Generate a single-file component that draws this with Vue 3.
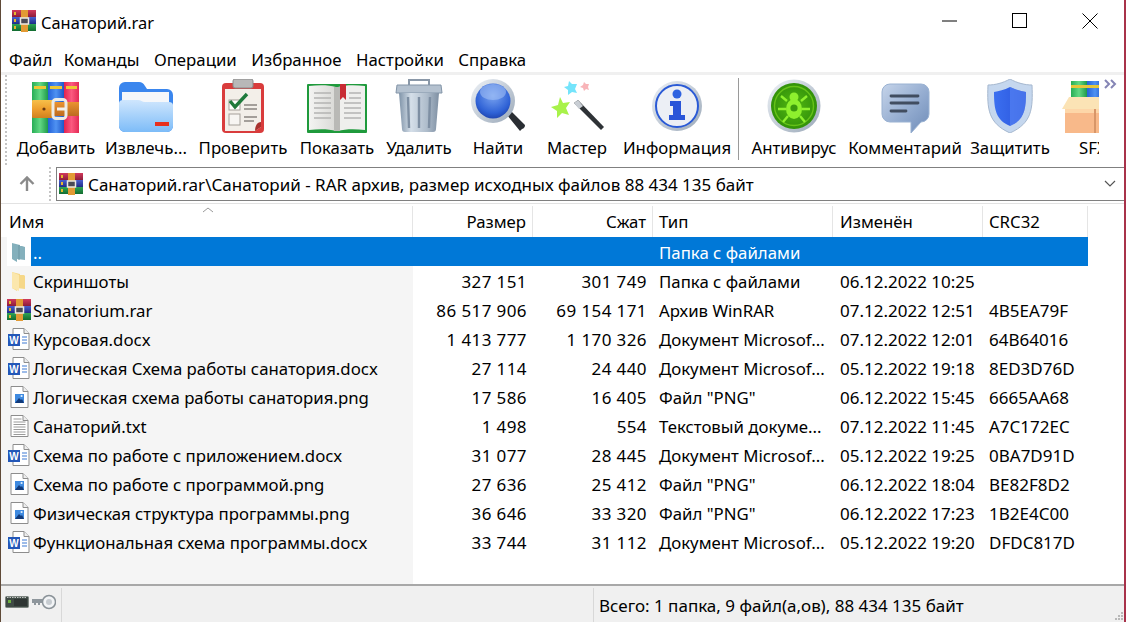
<script setup>
const menus = ['Файл', 'Команды', 'Операции', 'Избранное', 'Настройки', 'Справка']
const tools = [
  { id: 'i-add', label: 'Добавить' },
  { id: 'i-extract', label: 'Извлечь...' },
  { id: 'i-check', label: 'Проверить' },
  { id: 'i-book', label: 'Показать' },
  { id: 'i-trash', label: 'Удалить' },
  { id: 'i-find', label: 'Найти' },
  { id: 'i-wand', label: 'Мастер' },
  { id: 'i-info', label: 'Информация' },
  { sep: true },
  { id: 'i-bug', label: 'Антивирус' },
  { id: 'i-comment', label: 'Комментарий' },
  { id: 'i-shield', label: 'Защитить' },
  { id: 'i-sfx', label: 'SFX' },
]
const files = [
  { icon: 's-up', name: '..', size: '', packed: '', type: 'Папка с файлами', date: '', crc: '', sel: true },
  { icon: 's-folder', name: 'Скриншоты', size: '327 151', packed: '301 749', type: 'Папка с файлами', date: '06.12.2022 10:25', crc: '' },
  { icon: 's-rar', name: 'Sanatorium.rar', size: '86 517 906', packed: '69 154 171', type: 'Архив WinRAR', date: '07.12.2022 12:51', crc: '4B5EA79F' },
  { icon: 's-word', name: 'Курсовая.docx', size: '1 413 777', packed: '1 170 326', type: 'Документ Microsof...', date: '07.12.2022 12:01', crc: '64B64016' },
  { icon: 's-word', name: 'Логическая Схема работы санатория.docx', size: '27 114', packed: '24 440', type: 'Документ Microsof...', date: '05.12.2022 19:18', crc: '8ED3D76D' },
  { icon: 's-png', name: 'Логическая схема работы санатория.png', size: '17 586', packed: '16 405', type: 'Файл "PNG"', date: '06.12.2022 15:45', crc: '6665AA68' },
  { icon: 's-txt', name: 'Санаторий.txt', size: '1 498', packed: '554', type: 'Текстовый докуме...', date: '07.12.2022 11:45', crc: 'A7C172EC' },
  { icon: 's-word', name: 'Схема по работе с приложением.docx', size: '31 077', packed: '28 445', type: 'Документ Microsof...', date: '05.12.2022 19:25', crc: '0BA7D91D' },
  { icon: 's-png', name: 'Схема по работе с программой.png', size: '27 636', packed: '25 412', type: 'Файл "PNG"', date: '06.12.2022 18:04', crc: 'BE82F8D2' },
  { icon: 's-png', name: 'Физическая структура программы.png', size: '36 646', packed: '33 320', type: 'Файл "PNG"', date: '06.12.2022 17:23', crc: '1B2E4C00' },
  { icon: 's-word', name: 'Функциональная схема программы.docx', size: '33 744', packed: '31 112', type: 'Документ Microsof...', date: '05.12.2022 19:20', crc: 'DFDC817D' },
]
</script>

<template>
  <div class="window">
    <svg class="defs" width="0" height="0">
      <defs>
        <linearGradient id="g-belt" x1="0" y1="0" x2="0" y2="1"><stop offset="0" stop-color="#f7c04a"/><stop offset=".5" stop-color="#ee9f2e"/><stop offset="1" stop-color="#d0801f"/></linearGradient>
        <linearGradient id="g-belt2" x1="0" y1="0" x2="0" y2="1"><stop offset="0" stop-color="#ea9430"/><stop offset="1" stop-color="#bd6a20"/></linearGradient>
        <linearGradient id="g-bg" x1="0" y1="0" x2="1" y2="0"><stop offset="0" stop-color="#27ad55"/><stop offset=".5" stop-color="#62d884"/><stop offset="1" stop-color="#1f9a4a"/></linearGradient>
        <linearGradient id="g-bb" x1="0" y1="0" x2="1" y2="0"><stop offset="0" stop-color="#2361d8"/><stop offset=".5" stop-color="#4f92f2"/><stop offset="1" stop-color="#1e56c8"/></linearGradient>
        <linearGradient id="g-br" x1="0" y1="0" x2="1" y2="0"><stop offset="0" stop-color="#e3224e"/><stop offset=".5" stop-color="#fb5a80"/><stop offset="1" stop-color="#e32a55"/></linearGradient>
        <linearGradient id="g-folder" x1="0" y1="0" x2="0" y2="1"><stop offset="0" stop-color="#cfe6fd"/><stop offset="1" stop-color="#7dbcf8"/></linearGradient>
        <linearGradient id="g-trash" x1="0" y1="0" x2="1" y2="0"><stop offset="0" stop-color="#7f93a8"/><stop offset=".3" stop-color="#d5dfe9"/><stop offset=".7" stop-color="#aebccb"/><stop offset="1" stop-color="#7f90a3"/></linearGradient>
        <radialGradient id="g-lens" cx=".5" cy=".35" r=".7"><stop offset="0" stop-color="#7aa4f0"/><stop offset=".7" stop-color="#2f62d6"/><stop offset="1" stop-color="#1c3fa8"/></radialGradient>
        <linearGradient id="g-ring" x1="0" y1="0" x2="1" y2="1"><stop offset="0" stop-color="#eef2f7"/><stop offset="1" stop-color="#9aa8b8"/></linearGradient>
        <radialGradient id="g-bug" cx=".5" cy=".5" r=".6"><stop offset="0" stop-color="#52b812"/><stop offset="1" stop-color="#2c8a08"/></radialGradient>
        <linearGradient id="g-comment" x1="0" y1="0" x2="1" y2="1"><stop offset="0" stop-color="#c5d4ea"/><stop offset=".6" stop-color="#8fa8cd"/><stop offset="1" stop-color="#6f8cb8"/></linearGradient>
        <linearGradient id="g-shield" x1="0" y1="0" x2="1" y2="0"><stop offset="0" stop-color="#3b6ff0"/><stop offset="1" stop-color="#2a55dc"/></linearGradient>
        <linearGradient id="g-paper" x1="0" y1="0" x2="1" y2="0"><stop offset="0" stop-color="#f4f4f2"/><stop offset="1" stop-color="#d9d9d6"/></linearGradient>
        <linearGradient id="g-tr" x1="0" y1="0" x2="0" y2="1"><stop offset="0" stop-color="#d23a5c"/><stop offset="1" stop-color="#8c1c3a"/></linearGradient>
        <linearGradient id="g-tb" x1="0" y1="0" x2="0" y2="1"><stop offset="0" stop-color="#4a5fcf"/><stop offset="1" stop-color="#1f2c86"/></linearGradient>
        <linearGradient id="g-tg" x1="0" y1="0" x2="0" y2="1"><stop offset="0" stop-color="#2fa455"/><stop offset="1" stop-color="#126c30"/></linearGradient>

        <symbol id="i-add" viewBox="0 0 54 54">
          <rect x="3" y="3" width="16" height="51" fill="url(#g-bg)"/>
          <rect x="19" y="3" width="16" height="51" fill="url(#g-bb)"/>
          <rect x="35" y="3" width="15" height="51" fill="url(#g-br)"/>
          <rect x="5" y="7" width="12" height="3" fill="#ecc835"/><rect x="21" y="7" width="12" height="3" fill="#ecc835"/><rect x="37" y="7" width="11" height="3" fill="#ecc835"/>
          <rect x="3" y="21" width="22" height="18" rx="1" fill="url(#g-belt)"/>
          <rect x="25" y="23" width="25" height="14" fill="url(#g-belt2)"/>
          <rect x="24" y="20.500" width="13" height="19" rx="3" fill="none" stroke="#ecebe6" stroke-width="3"/>
          <rect x="28" y="28.500" width="9" height="3" fill="#f3f1ec"/>
          <circle cx="15" cy="30" r="1.600" fill="#6b3a10"/>
        </symbol>
        <symbol id="i-extract" viewBox="0 0 54 54">
          <path d="M0 9a6 6 0 0 1 6-6h14c3 0 4 1 6 4l2 3h20a6 6 0 0 1 6 6v31a6 6 0 0 1-6 6H6a6 6 0 0 1-6-6z" fill="#3a86ee"/>
          <rect x="3" y="13" width="47" height="20" fill="#f5f7fa"/>
          <path d="M0 24c0-2 2-3 4-3h15c3 0 4 2 7 2h24c2 0 4 1 4 3v21a6 6 0 0 1-6 6H6a6 6 0 0 1-6-6z" fill="url(#g-folder)"/>
          <rect x="36" y="43" width="14" height="4" fill="#e8301e"/>
        </symbol>
        <symbol id="i-check" viewBox="0 0 54 54">
          <rect x="6" y="4" width="42" height="50" rx="4" fill="#d93c3c"/>
          <path d="M9 10h36v38l-6 4H9z" fill="#f3efe9"/>
          <path d="M39 52c0-5 2-9 6-9v5z" fill="#a8322e"/>
          <rect x="17" y="0" width="20" height="9" rx="2" fill="#b8b8b8" stroke="#8a8a8a"/>
          <rect x="13" y="21" width="11" height="10" fill="#fff" stroke="#a5a09a"/>
          <path d="M14 22l5 6 12-13" fill="none" stroke="#1f7a3c" stroke-width="3.400"/>
          <rect x="13" y="35" width="11" height="11" fill="#f7f5f2" stroke="#a5a09a"/>
          <path d="M28 26h13M28 30h13M28 38h13M28 42h10" stroke="#8a8580" stroke-width="1.300"/>
        </symbol>
        <symbol id="i-book" viewBox="0 0 60 54">
          <rect x="0" y="5" width="60" height="49" rx="1" fill="#1f9a3c"/>
          <path d="M2 7c10-1 20-1 27 1v44c-7-2-17-2-27-1z" fill="url(#g-paper)"/>
          <path d="M58 7c-10-1-20-1-27 1v44c7-2 17-2 27-1z" fill="#efefed"/>
          <rect x="27" y="8" width="6" height="44" fill="#b9b9b6"/>
          <path d="M33 5h6v16l-3-3-3 3z" fill="#c82b33"/>
          <path d="M7 14h17M7 19h17M7 24h17M7 29h17M7 34h17M7 39h17M42 14h12M42 19h12M37 24h17M37 29h17M37 34h17M37 39h17" stroke="#b4b4b2" stroke-width="1.300"/>
        </symbol>
        <symbol id="i-trash" viewBox="0 0 54 54">
          <path d="M17 6V1h20v5" fill="none" stroke="#8a98a8" stroke-width="2"/>
          <path d="M5 6h44l1 8H4z" fill="#b4c1cf" stroke="#8395a8"/>
          <path d="M7 14h40l-3 36a3 3 0 0 1-3 3H13a3 3 0 0 1-3-3z" fill="url(#g-trash)"/>
          <path d="M16 18l1 31M27 18v31M38 18l-1 31" stroke="#7e8fa3" stroke-width="2.400"/>
        </symbol>
        <symbol id="i-find" viewBox="0 0 54 54">
          <path d="M36 36l4-4 14 14q0 3-3 4l-2 2z" fill="#2a2e33"/>
          <circle cx="22" cy="22" r="22" fill="url(#g-ring)"/>
          <circle cx="22" cy="22" r="17.500" fill="url(#g-lens)"/>
          <ellipse cx="22" cy="13" rx="13" ry="8" fill="#a6c2f5" opacity=".55"/>
        </symbol>
        <symbol id="i-wand" viewBox="0 0 54 54">
          <path d="M10 18l3 6 7-1-4 6 3 7-7-2-5 5v-7l-6-4 7-2z" fill="#a8f24a"/>
          <path d="M19 2l3 3h5l-2 5 2 4-5-1-4 3v-5l-4-3 4-1z" fill="#74e4fb"/>
          <path d="M34 3l2 2 3 0-1 3 1 3-3-1-2 2-1-3-3-1 3-2z" fill="#f8b4b8"/>
          <path d="M24 24l4-3 26 27-3 3z" fill="#2e3236"/>
          <path d="M24 24l4-3 5 6-4 3z" fill="#c9ced4"/>
        </symbol>
        <symbol id="i-info" viewBox="0 0 54 54">
          <circle cx="27" cy="27" r="25" fill="url(#g-ring)"/>
          <circle cx="27" cy="27" r="21" fill="#eceff5" stroke="#2a5ad6" stroke-width="2"/>
          <circle cx="27" cy="15" r="4.500" fill="#2f63e0"/>
          <path d="M20 22h11v14h4v5H19v-5h4v-9h-3z" fill="#2a55d8"/>
        </symbol>
        <symbol id="i-bug" viewBox="0 0 54 54">
          <circle cx="27" cy="27" r="26.500" fill="url(#g-ring)"/>
          <circle cx="27" cy="27" r="23" fill="url(#g-bug)"/>
          <circle cx="27" cy="27" r="19.500" fill="none" stroke="#66c21a" stroke-width="1.400"/>
          <ellipse cx="27" cy="30" rx="8" ry="10" fill="#8ef02e"/>
          <circle cx="27" cy="18" r="4.500" fill="#8ef02e"/>
          <path d="M20 22l-6-5M34 22l6-5M19 30h-8M35 30h8M21 37l-5 6M33 37l5 6" stroke="#8ef02e" stroke-width="2.400" fill="none"/>
          <circle cx="27" cy="29" r="3.600" fill="#3c9a0e"/>
        </symbol>
        <symbol id="i-comment" viewBox="0 0 54 54">
          <path d="M12 5h31a8 8 0 0 1 8 8v22a8 8 0 0 1-8 8L33 54V43H12a8 8 0 0 1-8-8V13a8 8 0 0 1 8-8z" fill="url(#g-comment)" stroke="#9ab2d2"/>
          <path d="M13 17h27M13 24h27M13 32h15" stroke="#414d60" stroke-width="2.800" stroke-linecap="round"/>
        </symbol>
        <symbol id="i-shield" viewBox="0 0 54 54">
          <path d="M27 0c7 4 15 6 22 6 1 24 0 38-22 48C5 44 4 30 5 6c7 0 15-2 22-6z" fill="#c5d7ee" stroke="#a6b8cf"/>
          <path d="M27 8c6 3 11 4 16 5 0 18-2 28-16 34C13 41 11 31 11 13c5-1 10-2 16-5z" fill="url(#g-shield)"/>
          <path d="M27 8c6 3 11 4 16 5 0 18-2 28-16 34z" fill="#5e8bf5" opacity=".55"/>
        </symbol>
        <symbol id="i-sfx" viewBox="0 0 54 54">
          <rect x="9" y="2" width="16" height="18" fill="url(#g-bg)"/>
          <rect x="25" y="2" width="16" height="18" fill="url(#g-bb)"/>
          <rect x="9" y="6" width="16" height="3" fill="#e6c63a"/><rect x="25" y="6" width="16" height="3" fill="#e6c63a"/>
          <path d="M0 30l7-12h40l7 12z" fill="#fbe3b5"/>
          <rect x="3" y="30" width="48" height="24" fill="#f8b98a"/>
          <rect x="3" y="30" width="48" height="4" fill="#fdd6a8"/>
          <rect x="32" y="30" width="2" height="24" fill="#d89668"/>
        </symbol>

        <symbol id="s-up" viewBox="0 0 24 24">
          <path d="M5 3l8 2v1h2l3 1v13l-8-1v3l-5-3z" fill="#84b0bc"/>
          <path d="M12 5v15" stroke="#6d97a3"/>
        </symbol>
        <symbol id="s-folder" viewBox="0 0 24 24">
          <path d="M5 3l8 2v1h4l1 1v13l-8-1v3l-5-3z" fill="#f6d889"/>
          <path d="M5 3l7 3v16l-7-3z" fill="#fbe7ad"/>
        </symbol>
        <symbol id="s-rar" viewBox="0 0 24 22">
          <rect x="0" y="0" width="24" height="7" fill="url(#g-tr)"/>
          <rect x="0" y="7" width="24" height="7" fill="url(#g-tb)"/>
          <rect x="0" y="14" width="24" height="7" fill="url(#g-tg)"/>
          <path d="M2 2h2v3H2zM2 9h2v3H2zM2 16h2v3H2z" fill="#e6b92e"/>
          <rect x="9" y="0" width="7" height="22" fill="#e29a34"/>
          <rect x="8.500" y="8" width="8" height="6" fill="#4a4a55" stroke="#eceae2" stroke-width="1.500"/>
        </symbol>
        <symbol id="s-word" viewBox="0 0 24 24">
          <path d="M6 1.500h11l5 5v16H6z" fill="#fff" stroke="#8d8d8d"/>
          <path d="M17 1.500v5h5" fill="#eee" stroke="#8d8d8d"/>
          <path d="M15 10h5M15 13h5M15 16h5" stroke="#3f7ad4" stroke-width="1.200"/>
          <rect x="1" y="7" width="12" height="12" fill="#2357b8"/>
          <text class="word-w" x="7" y="16.600" text-anchor="middle">W</text>
        </symbol>
        <symbol id="s-png" viewBox="0 0 24 24">
          <path d="M4 1.500h12l5 5v16H4z" fill="#fff" stroke="#8d8d8d"/>
          <path d="M16 1.500v5h5" fill="#eee" stroke="#8d8d8d"/>
          <rect x="8" y="9" width="9" height="9" fill="#3f8ae0"/>
          <path d="M8 18l4-5 2 2 1-1 2 4z" fill="#123a7a"/>
          <circle cx="14.600" cy="11" r="1.100" fill="#dff0ff"/>
        </symbol>
        <symbol id="s-txt" viewBox="0 0 24 24">
          <path d="M4 1.500h12l5 5v16H4z" fill="#fff" stroke="#8d8d8d"/>
          <path d="M16 1.500v5h5" fill="#eee" stroke="#8d8d8d"/>
          <path d="M6.500 5h8M6.500 8h12M6.500 10.500h12M6.500 13h12M6.500 15.500h12M6.500 18h12M6.500 20.500h12" stroke="#9a9a9a"/>
        </symbol>
      </defs>
    </svg>

    <header class="titlebar">
      <svg class="title-icon"><use href="#s-rar"/></svg>
      <span class="title-text">Санаторий.rar</span>
      <div class="controls">
        <svg width="16" height="16" viewBox="0 0 16 16"><path d="M0 8h15" stroke="#000"/></svg>
        <svg width="16" height="16" viewBox="0 0 16 16"><rect x=".5" y=".5" width="14" height="14" fill="none" stroke="#000"/></svg>
        <svg width="16" height="16" viewBox="0 0 16 16"><path d="M.5.500l15 15M15.500.500l-15 15" stroke="#000" fill="none"/></svg>
      </div>
    </header>

    <nav class="menubar">
      <span v-for="m in menus" :key="m">{{ m }}</span>
    </nav>

    <section class="toolbar">
      <i class="grip"></i>
      <div class="tools">
        <template v-for="(t, n) in tools" :key="n">
          <div v-if="t.sep" class="tool-sep"></div>
          <div v-else class="tool" :class="t.id">
            <svg class="tool-icon"><use :href="'#' + t.id"/></svg>
            <span>{{ t.label }}</span>
          </div>
        </template>
      </div>
      <div class="more">
        <svg class="more-icon" width="14" height="10" viewBox="0 0 14 10"><path d="M1 1l4 4-4 4M7 1l4 4-4 4" fill="none" stroke="#8585b5" stroke-width="2"/></svg>
      </div>
    </section>

    <section class="addressbar">
      <svg class="up" width="18" height="16" viewBox="0 0 18 16"><path d="M9 15V2M2.500 8L9 1.500 15.500 8" fill="none" stroke="#8a8a8a" stroke-width="2.400"/></svg>
      <i class="grip"></i>
      <div class="address">
        <svg class="addr-icon"><use href="#s-rar"/></svg>
        <span class="addr-text">Санаторий.rar\Санаторий - RAR архив, размер исходных файлов 88 434 135 байт</span>
        <svg class="addr-caret" width="12" height="8" viewBox="0 0 12 8"><path d="M1 1l5 5 5-5" fill="none" stroke="#555" stroke-width="1.200"/></svg>
      </div>
    </section>

    <main class="list">
      <div class="row head">
        <div class="cell name-head">Имя<svg class="sort" width="12" height="6" viewBox="0 0 12 6"><path d="M1 5l5-4 5 4" fill="none" stroke="#9a9a9a"/></svg></div>
        <div class="cell num">Размер</div>
        <div class="cell num">Сжат</div>
        <div class="cell">Тип</div>
        <div class="cell date">Изменён</div>
        <div class="cell">CRC32</div>
      </div>
      <div v-for="f in files" :key="f.name" class="row item" :class="{ sel: f.sel }">
        <div class="cell name">
          <span class="slot"><svg class="file-icon"><use :href="'#' + f.icon"/></svg></span>
          <span class="fname">{{ f.name }}</span>
        </div>
        <div class="cell num digits">{{ f.size }}</div>
        <div class="cell num digits">{{ f.packed }}</div>
        <div class="cell">{{ f.type }}</div>
        <div class="cell date big">{{ f.date }}</div>
        <div class="cell big">{{ f.crc }}</div>
      </div>
      <div class="filler"><div class="filler-name"></div></div>
    </main>

    <footer class="statusbar">
      <div class="st-left">
        <svg width="24" height="12" viewBox="0 0 24 12"><rect x=".5" y=".5" width="23" height="11" rx="1" fill="#3f4a45" stroke="#7d8580"/><rect x="3" y="4" width="3" height="3" fill="#6fb040"/><path d="M2 1.500h20" stroke="#c4c8c6" stroke-dasharray="1.500 1"/><rect x="9" y="3" width="13" height="7" fill="#2e3533"/></svg>
        <svg width="24" height="16" viewBox="0 0 24 16"><path d="M0 5h13v4H8v2H6V9H4v2H2V9H0z" fill="#8e969c"/><circle cx="17" cy="8" r="6.500" fill="#f2f4f6" stroke="#8a9298" stroke-width="1.500"/><circle cx="17" cy="8" r="3" fill="#c6cbd0"/></svg>
      </div>
      <div class="st-mid"></div>
      <div class="st-right">Всего: 1 папка, 9 файл(а,ов), 88 434 135 байт</div>
      <svg class="resize" width="10" height="10" viewBox="0 0 10 10"><path d="M8 1h2v2H8zM5 4h2v2H5zM8 4h2v2H8zM2 7h2v2H2zM5 7h2v2H5zM8 7h2v2H8z" fill="#b8b8b8"/></svg>
    </footer>
  </div>
</template>

<style scoped>
.window {
  width: 1126px;
  height: 622px;
  box-sizing: border-box;
  display: flex;
  flex-direction: column;
  overflow: hidden;
  background: #fff;
  color: #000;
  font-family: "Noto Sans", "Open Sans", sans-serif;
  font-size: 16.8px;
  border-left: 1px solid #5f4a38;
  border-right: 2px solid #a8324a;
}
.defs { display: block; flex: none; }
.titlebar {
  flex: none;
  height: 42px;
  display: flex;
  align-items: center;
  padding-left: 11px;
}
.title-icon { width: 24px; height: 22px; margin-right: 5px; flex: none; }
.title-text { font-size: 16.4px; padding-top: 3px; }
.controls {
  margin-left: auto;
  display: flex;
  gap: 54px;
  padding-right: 26px;
}
.menubar {
  flex: none;
  height: 33px;
  box-sizing: border-box;
  display: flex;
  align-items: center;
  gap: 14.5px;
  padding: 4px 0 0 8px;
  border-bottom: 3px solid #f0f0f0;
}
.menubar span:first-child { margin-right: -3px; }
.toolbar {
  flex: none;
  height: 90px;
  display: flex;
  position: relative;
}
.grip {
  flex: none;
  width: 2px;
  margin-left: 4px;
  background: repeating-linear-gradient(#c4c4c4 0 2px, transparent 2px 4px);
}
.tools {
  flex: none;
  width: 1088px;
  margin-left: 4px;
  display: grid;
  grid-template-columns: 90px 90px 104px 84px 80px 78px 80px 120px 4px 106px 116px 94px 62px;
  overflow: hidden;
}
.tool {
  display: flex;
  flex-direction: column;
  align-items: center;
  padding-top: 4px;
  white-space: nowrap;
}
.tool-icon { width: 54px; height: 54px; flex: none; }
.i-book .tool-icon { width: 60px; }
.i-sfx { align-items: flex-start; }
.i-sfx .tool-icon { margin-left: 5px; }
.i-sfx span { margin-left: 22px; }
.tool span { margin-top: 4px; line-height: 22px; }
.tool-sep { width: 1px; height: 82px; margin: 3px 0 0 1px; background: #9a9a9a; }
.more { position: absolute; left: 1103px; top: 4px; }
.more-icon { display: block; }
.addressbar {
  flex: none;
  height: 38px;
  box-sizing: border-box;
  padding: 2px 0;
  display: flex;
  align-items: center;
}
.up { margin-left: 17px; flex: none; }
.addressbar .grip { align-self: stretch; margin-left: 13px; }
.address {
  flex: 1;
  align-self: stretch;
  display: flex;
  align-items: center;
  box-sizing: border-box;
  margin-left: 5px;
  padding: 0 8px 0 2px;
  border: 1px solid #808080;
  border-right: none;
  min-width: 0;
}
.addr-icon { width: 24px; height: 22px; margin-right: 5px; flex: none; }
.addr-text { flex: 1; white-space: nowrap; font-size: 17px; }
.list {
  flex: 1;
  display: flex;
  flex-direction: column;
  min-height: 0;
  box-sizing: border-box;
  padding-top: 2px;
  border-top: 1px solid #e2e2e2;
}
.row {
  flex: none;
  height: 29px;
  display: grid;
  grid-template-columns: 412px 120px 120px 180px 150px 105px;
  width: 1087px;
}
.head { height: 31px; }
.head .cell { border-right: 1px solid #e5e5e5; box-sizing: border-box; position: relative; padding-top: 0; }
.cell {
  padding: 1px 6px 0;
  display: flex;
  align-items: center;
  white-space: nowrap;
  overflow: hidden;
  box-sizing: border-box;
}
.head .name-head { padding-left: 8px; overflow: visible; }
.sort { position: absolute; left: 201px; top: 1px; }
.num { justify-content: flex-end; }
.digits { font-size: 17px; letter-spacing: .4px; }
.big { font-size: 17px; }
.date { padding-left: 7px; }
.name { background: #f5f5f5; padding: 0 0 0 6px; }
.slot { width: 24px; height: 29px; display: flex; align-items: center; flex: none; }
.file-icon { width: 24px; height: 24px; }
.fname { padding: 1px 0 0 2px; }
.sel { background: #0078d7; color: #fff; }
.sel .name { align-items: stretch; }
.sel .slot { background: #fff; }
.sel .fname { flex: 1; background: #0078d7; display: flex; align-items: center; }
.filler { flex: 1; }
.filler-name { width: 412px; height: 100%; background: #f5f5f5; }
.statusbar {
  flex: none;
  height: 38px;
  box-sizing: border-box;
  display: flex;
  align-items: center;
  background: #f0f0f0;
  border-top: 2px solid #a8a8a8;
  padding-top: 2px;
  position: relative;
}
.st-left { width: 61px; padding: 0 0 6px 4px; box-sizing: border-box; display: flex; gap: 3px; align-items: center; height: 100%; border-right: 1px solid #d8d8d8; }
.st-mid { width: 532px; box-sizing: border-box; height: 100%; border-right: 1px solid #d8d8d8; }
.st-right { padding: 1px 0 0 5px; font-size: 17px; }
.resize { position: absolute; right: 1px; bottom: 1px; }
</style>

<style>
.word-w { font: 700 10px "Liberation Sans", sans-serif; fill: #fff; }
</style>
